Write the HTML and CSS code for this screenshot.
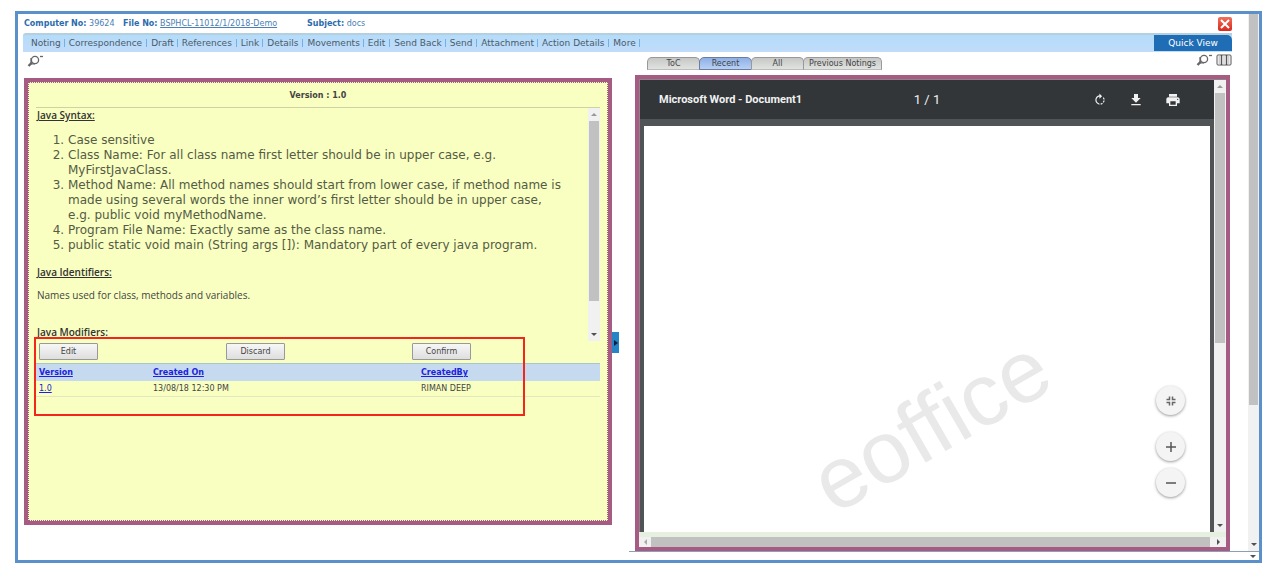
FILE: index.html
```html
<!DOCTYPE html>
<html lang="en">
<head>
<meta charset="utf-8">
<title>File noting</title>
<link rel="stylesheet" href="styles.css">
</head>
<body>
<div class="window">
  <div class="app">
    <header class="file-info">
      <span class="info computer"><b>Computer No:</b> 39624</span>
      <span class="info file"><b>File No:</b> <a href="#file">BSPHCL-11012/1/2018-Demo</a></span>
      <span class="info"><b>Subject:</b> docs</span>
      <button class="close" aria-label="Close">
        <svg viewBox="0 0 14 14" width="14" height="14"><path d="M3 3l8 8M11 3l-8 8" stroke="#fff" stroke-width="2"/></svg>
      </button>
    </header>
    <nav class="menu">
      <a href="#noting">Noting</a><a href="#correspondence">Correspondence</a><a href="#draft">Draft</a><a href="#references">References</a><a href="#link">Link</a><a href="#details">Details</a><a href="#movements">Movements</a><a href="#edit">Edit</a><a href="#back">Send Back</a><a href="#send">Send</a><a href="#attachment">Attachment</a><a href="#action">Action Details</a><a href="#more">More</a>
      <button class="quick-view">Quick View</button>
    </nav>
    <div class="columns">
      <section class="left-col">
        <div class="tools">
          <button class="icon" aria-label="Zoom">
            <svg viewBox="0 0 17 13" width="17" height="13" fill="none" stroke="#666"><circle cx="8" cy="5" r="3.6" stroke-width="1.3"/><path d="M5 7.500L1.500 11" stroke-width="2.400"/><path d="M4 3v6h4" stroke-width="1.200"/><path d="M13 1.500h3" stroke-width="1.300"/></svg>
          </button>
        </div>
        <div class="note">
          <h1>Version : 1.0</h1>
          <div class="note-scroll">
            <div class="note-text">
              <h2>Java Syntax:</h2>
              <ol>
                <li>Case sensitive</li>
                <li>Class Name: For all class name first letter should be in upper case, e.g. MyFirstJavaClass.</li>
                <li>Method Name: All method names should start from lower case, if method name is made using several words the inner word’s first letter should be in upper case, e.g. public void myMethodName.</li>
                <li>Program File Name: Exactly same as the class name.</li>
                <li>public static void main (String args []): Mandatory part of every java program.</li>
              </ol>
              <h2>Java Identifiers:</h2>
              <p>Names used for class, methods and variables.</p>
              <h2 class="last">Java Modifiers:</h2>
            </div>
            <div class="bar"><i class="up"></i><i class="thumb note-thumb"></i><i class="down"></i></div>
          </div>
          <div class="versions">
            <div class="actions"><button>Edit</button><button>Discard</button><button>Confirm</button></div>
            <table>
              <thead><tr><th><a href="#version">Version</a></th><th><a href="#created">Created On</a></th><th><a href="#by">CreatedBy</a></th></tr></thead>
              <tbody><tr><td><a href="#v1">1.0</a></td><td>13/08/18 12:30 PM</td><td>RIMAN DEEP</td></tr></tbody>
            </table>
            <div class="highlight"></div>
          </div>
          <button class="handle" aria-label="Expand"></button>
        </div>
      </section>
      <section class="right-col">
        <div class="tools">
          <div class="tabs"><button>ToC</button><button class="active">Recent</button><button>All</button><button class="wide">Previous Notings</button></div>
          <div class="view-icons">
            <button class="icon" aria-label="Zoom">
              <svg viewBox="0 0 17 13" width="17" height="13" fill="none" stroke="#666"><circle cx="8" cy="5" r="3.600" stroke-width="1.300"/><path d="M5 7.500L1.500 11" stroke-width="2.400"/><path d="M4 3v6h4" stroke-width="1.200"/><path d="M13 1.500h3" stroke-width="1.300"/></svg>
            </button>
            <button class="icon" aria-label="Columns">
              <svg viewBox="0 0 16 12" width="16" height="12" fill="none" stroke="#555"><rect x="1" y="1" width="14" height="10" rx="1"/><path d="M5.500 1v10M10.500 1v10" stroke-width="1.500"/><path d="M3.200 1v10M8 1v10M12.800 1v10" stroke="#bbb"/></svg>
            </button>
          </div>
        </div>
        <div class="viewer">
          <div class="viewer-row">
            <div class="pdf">
              <div class="pdf-bar">
                <span class="doc-title">Microsoft Word - Document1</span>
                <span class="pages">1 / 1</span>
                <span class="pdf-actions">
                  <button aria-label="Rotate"><svg viewBox="0 0 24 24" width="14" height="14" fill="#f1f1f1"><path d="M15.550 5.550L11 1v3.070C7.060 4.560 4 7.920 4 12s3.050 7.440 7 7.930v-2.020c-2.840-.480-5-2.940-5-5.910s2.160-5.430 5-5.910V10l4.550-4.450zM19.930 11c-.170-1.390-.720-2.730-1.620-3.890l-1.420 1.420c.540.750.880 1.600 1.020 2.470h2.020zM13 17.900v2.020c1.390-.170 2.740-.710 3.900-1.610l-1.440-1.440c-.750.540-1.590.890-2.460 1.030zm3.890-2.420l1.420 1.410c.900-1.160 1.450-2.500 1.620-3.890h-2.020c-.140.870-.480 1.720-1.020 2.480z"/></svg></button>
                  <button aria-label="Download"><svg viewBox="0 0 24 24" width="16" height="16" fill="#f1f1f1"><path d="M19 9h-4V3H9v6H5l7 7 7-7zM5 18v2h14v-2H5z"/></svg></button>
                  <button aria-label="Print"><svg viewBox="0 0 24 24" width="16" height="16" fill="#f1f1f1"><path d="M19 8H5c-1.660 0-3 1.340-3 3v6h4v4h12v-4h4v-6c0-1.660-1.340-3-3-3zm-3 11H8v-5h8v5zm3-7c-.550 0-1-.450-1-1s.450-1 1-1 1 .450 1 1-.450 1-1 1zm-1-9H6v4h12V3z"/></svg></button>
                </span>
              </div>
              <div class="sheet">
                <span class="watermark">eoffice</span>
                <div class="zooms">
                  <button aria-label="Fit to page"><svg viewBox="0 0 12 12" width="12" height="12" fill="none" stroke="#666" stroke-width="1.500"><path d="M4.500 1.500v3h-3M7.500 1.500v3h3M4.500 10.500v-3h-3M7.500 10.500v-3h3"/></svg></button>
                  <button aria-label="Zoom in"><svg viewBox="0 0 12 12" width="12" height="12" stroke="#555" stroke-width="1.500"><path d="M6 1v10M1 6h10"/></svg></button>
                  <button aria-label="Zoom out"><svg viewBox="0 0 12 12" width="12" height="12" stroke="#555" stroke-width="1.500"><path d="M1 6h10"/></svg></button>
                </div>
              </div>
            </div>
            <div class="bar"><i class="up"></i><i class="thumb pdf-thumb"></i><i class="down"></i></div>
          </div>
          <div class="hbar"><i class="prev"></i><i class="hthumb"></i><i class="next"></i></div>
        </div>
      </section>
    </div>
  </div>
  <div class="bar page-bar"><i class="thumb page-thumb"></i><i class="down"></i></div>
  <div class="foot"><i class="down"></i></div>
</div>
</body>
</html>
```
FILE: styles.css
```css
* { box-sizing: border-box; }
body {
  margin: 0;
  min-height: 100vh;
  padding: 11px 22px 13px 15px;
  display: flex;
  background: #fff;
  color: #444;
  font: 8px/12px "DejaVu Sans", sans-serif;
}
button { margin: 0; padding: 0; border: 0; background: none; font: inherit; color: inherit; }
svg { display: block; }
h1, h2, p, ol { margin: 0; }

.window {
  flex: 1;
  display: grid;
  grid-template-columns: 1fr 11px;
  grid-template-rows: 1fr 9px;
  column-gap: 16px;
  padding-left: 5px;
  border: 3px solid #5b91cb;
}
.app { display: flex; flex-direction: column; min-width: 0; }

.file-info {
  display: flex;
  align-items: center;
  height: 19px;
  padding-left: 1px;
  color: #4a80b4;
}
.file-info b { color: #2c6cae; }
.file-info a { color: #4a80b4; }
.computer { width: 99px; }
.file { width: 184px; }
.info { white-space: nowrap; }
.close {
  width: 14px;
  height: 14px;
  margin-left: auto;
  border-radius: 2px;
  background: linear-gradient(#f0705c, #d8281c);
}

.menu {
  display: flex;
  height: 19px;
  border-top: 2px solid #b4cfdd;
  border-top-left-radius: 3px;
  background: linear-gradient(#b4dcfa, #c0dcfa);
  font-size: 9px;
}
.menu a {
  position: relative;
  padding: 0 4px;
  color: #4c5a68;
  line-height: 16px;
  text-decoration: none;
}
.menu a:first-child { padding-left: 8px; }
.menu a:nth-child(even) { padding-right: 5px; }
.menu a::after {
  content: "";
  position: absolute;
  right: 0;
  top: 4px;
  height: 8px;
  border-right: 1px solid #74b0e4;
}
.quick-view {
  width: 78px;
  height: 16px;
  margin-left: auto;
  border-top-right-radius: 5px;
  background: #1f6db5;
  color: #fff;
}

.columns {
  flex: 1;
  display: grid;
  grid-template-columns: 589fr 596fr;
  column-gap: 23px;
  padding: 0 2px 0 1px;
}
.left-col, .right-col { display: flex; flex-direction: column; min-width: 0; }
.left-col { padding-bottom: 26px; }
.tools { display: flex; height: 23px; }
.left-col .tools { height: 26px; padding: 3px 3px; }
.icon { align-self: flex-start; }

.note {
  flex: 1;
  position: relative;
  padding: 2px 8px;
  border: 4px solid #a65c82;
  outline: 1px dotted #a65c82;
  outline-offset: -5px;
  background: #f9ffc1;
}
.note h1 {
  height: 24px;
  border-bottom: 1px solid #cfd0a4;
  font-size: 8px;
  line-height: 24px;
  text-align: center;
}
.note-scroll { display: flex; }
.note-text { flex: 1; min-width: 0; padding-left: 1px; }
.note-text h2, .note-text p { font: 10px/14px "Open Sans", sans-serif; }
.note-text h2 { color: #333; font-weight: 600; text-decoration: underline; }
.note-text ol {
  margin: 11px 0 12px;
  padding: 0 23px 0 31px;
  color: #555b45;
  font-size: 12px;
  line-height: 15px;
}
.note-text p { margin: 9px 0 23px; }
.note-text .last { height: 16px; }

.bar {
  width: 12px;
  display: flex;
  flex-direction: column;
  background: #f1f1f1;
}
.up, .down, .prev, .next { flex: none; display: flex; align-items: center; justify-content: center; width: 12px; height: 13px; }
.up::after, .down::after, .prev::after, .next::after { content: ""; border: 3px solid transparent; }
.up::after { border-top: 0; border-bottom-color: #999; }
.down::after { border-bottom: 0; border-top-color: #505050; }
.prev::after { border-left: 0; border-right-color: #aaa; }
.next::after { border-right: 0; border-left-color: #505050; }
.down { margin-top: auto; }
.thumb { margin: 0 1px; background: #c1c1c1; }
.note-thumb { height: 180px; }

.versions { position: relative; height: 75px; padding-top: 2px; }
.actions { display: grid; grid-template-columns: 188fr 187fr 189fr; height: 20px; padding-left: 3px; }
.actions button {
  width: 59px;
  height: 17px;
  border: 1px solid #999;
  border-radius: 1px;
  background: linear-gradient(#f7f7f7, #dedede);
  line-height: 14px;
}
table { width: 100%; border-collapse: collapse; table-layout: fixed; }
th, td { padding: 0 3px; text-align: left; line-height: 15px; }
th:first-child { width: 114px; }
th:nth-child(2) { width: 268px; }
th { background: #c5daef; line-height: 17px; }
thead { border-top: 1px solid #a9c4cf; }
tbody { border-bottom: 1px solid #e1e8c0; }
table a { color: #1c22dc; }
.highlight { position: absolute; left: -2px; top: -4px; width: 87%; height: 79px; border: 2px solid #f3261b; pointer-events: none; }
.handle {
  position: absolute;
  right: -11px;
  top: 250px;
  width: 7px;
  height: 21px;
  display: flex;
  align-items: center;
  justify-content: center;
  background: #2484c6;
}
.handle::after { content: ""; border: 3px solid transparent; border-right: 0; border-left: 4px solid #0c2340; }

.tabs { display: flex; padding: 5px 0 5px 12px; }
.tabs button {
  width: 53px;
  height: 13px;
  margin-right: -1px;
  border: 1px solid #999;
  border-bottom-color: #bbb;
  border-radius: 5px 5px 0 0;
  background: linear-gradient(#c6c8c6, #e0e3e0);
  line-height: 12px;
  white-space: nowrap;
}
.tabs .active { border-color: #6d7da0; background: linear-gradient(#8fb0e6, #b8d0f6); }
.tabs .wide { width: 79px; }
.view-icons { display: flex; gap: 3px; margin: 0 -2px 0 auto; padding-top: 2px; }

.viewer {
  flex: 1;
  display: flex;
  flex-direction: column;
  border: 4px solid #a65c82;
}
.viewer-row { flex: 1; display: flex; border-top: 1px solid #8d8288; border-left: 1px solid #8d8288; }
.pdf { flex: 1; display: flex; flex-direction: column; padding: 0 4px; background: #505457; }
.pdf-bar {
  display: grid;
  grid-template-columns: 1fr auto 1fr;
  align-items: center;
  height: 39px;
  margin: 0 -4px 7px;
  padding: 0 19px;
  background: #323639;
  color: #f1f1f1;
  font: 11px/14px Roboto, sans-serif;
}
.doc-title { font-weight: 700; }
.pages { white-space: nowrap; font-size: 13px; }
.pdf-actions { display: flex; justify-content: flex-end; gap: 21px; padding-right: 14px; }
.sheet { flex: 1; position: relative; overflow: hidden; background: #fff; }
.watermark {
  position: absolute;
  left: 28%;
  bottom: 63px;
  color: #e9e9e9;
  font: 88px/88px "Liberation Sans", sans-serif;
  transform: rotate(-30deg);
}
.zooms { position: absolute; right: 25px; bottom: 35px; display: grid; gap: 7px; }
.zooms button {
  width: 29px;
  height: 29px;
  display: flex;
  align-items: center;
  justify-content: center;
  border-radius: 50%;
  background: #f4f4f4;
  box-shadow: 0 1px 3px #999;
}
.zooms button:first-child { margin-bottom: 10px; }
.pdf-thumb { height: 250px; }
.hbar { display: flex; height: 15px; border-top: 5px solid #e6f0e0; background: #f1f1f1; }
.hthumb { flex: 1; background: #c1c1c1; }
.prev, .next { height: 10px; }
.next { width: 16px; }

.page-bar { width: 11px; }
.page-thumb { height: 391px; }
.foot {
  grid-column: 1 / -1;
  width: 51%;
  margin-left: auto;
  display: flex;
  justify-content: flex-end;
  border-top: 1px solid #8ba0b2;
}
.foot .down { height: 8px; margin-top: 0; }
```
